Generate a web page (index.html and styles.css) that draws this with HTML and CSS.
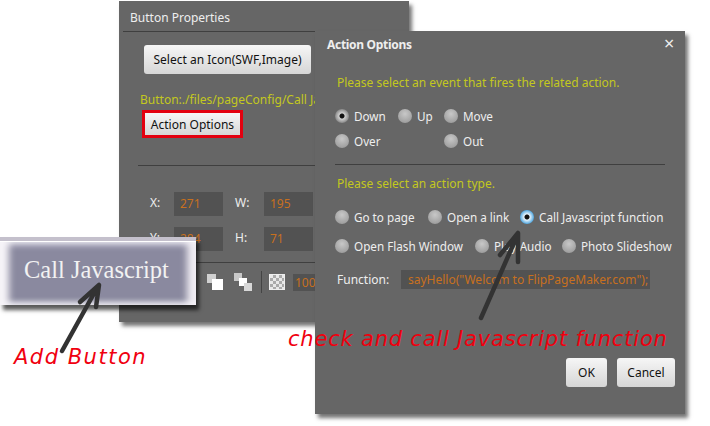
FILE: index.html
```html
<!DOCTYPE html>
<html>
<head>
  <meta charset="utf-8">
  <title>Call Javascript</title>
  <link rel="stylesheet" href="styles.css">
</head>
<body>
  <div class="stage">
    <div class="window back-window">
      <div class="back-title">Button Properties</div>
      <div class="back-body">
        <button class="button icon-button">Select an Icon(SWF,Image)</button>
        <div class="hint path-text">Button:./files/pageConfig/Call Javascript.swf</div>
        <button class="button action-button">Action Options</button>
        <div class="rule first-rule"></div>
        <div class="size-row">
          <span class="field-label">X:</span><span class="field">271</span>
          <span class="field-label second">W:</span><span class="field">195</span>
        </div>
        <div class="size-row">
          <span class="field-label">Y:</span><span class="field">284</span>
          <span class="field-label second">H:</span><span class="field">71</span>
        </div>
        <div class="rule second-rule"></div>
        <div class="tool-row">
          <svg class="tool-icon front-icon" width="16" height="16" viewBox="0 0 16 16">
            <rect x="0" y="0" width="9" height="9" fill="#d0d0d0"/>
            <rect x="5" y="5" width="11" height="11" fill="#fff"/>
          </svg>
          <svg class="tool-icon stack-icon" width="18" height="18" viewBox="0 0 18 18">
            <rect x="0" y="0" width="8" height="8" fill="#c8c8c8"/>
            <rect x="5" y="5" width="8" height="8" fill="#fff"/>
            <rect x="10" y="10" width="8" height="8" fill="#d8d8d8"/>
          </svg>
          <span class="tool-divider"></span>
          <span class="checker"></span>
          <span class="field small-field">100</span>
        </div>
      </div>
    </div>

    <div class="window front-window">
      <div class="front-title">
        <span>Action Options</span>
        <span class="close">×</span>
      </div>
      <div class="front-body">
        <div class="hint">Please select an event that fires the related action.</div>
        <div class="radio-grid event-grid">
          <label class="radio-item"><i class="radio checked"></i>Down</label>
          <label class="radio-item"><i class="radio"></i>Up</label>
          <label class="radio-item"><i class="radio"></i>Move</label>
          <label class="radio-item"><i class="radio"></i>Over</label>
          <span></span>
          <label class="radio-item"><i class="radio"></i>Out</label>
        </div>
        <div class="rule front-rule"></div>
        <div class="hint">Please select an action type.</div>
        <div class="radio-row type-row">
          <label class="radio-item"><i class="radio"></i>Go to page</label>
          <label class="radio-item"><i class="radio"></i>Open a link</label>
          <label class="radio-item"><i class="radio selected"></i>Call Javascript function</label>
        </div>
        <div class="radio-row flash-row">
          <label class="radio-item"><i class="radio"></i>Open Flash Window</label>
          <label class="radio-item"><i class="radio"></i>Play Audio</label>
          <label class="radio-item"><i class="radio"></i>Photo Slideshow</label>
        </div>
        <div class="function-row">
          <span class="function-label">Function:</span>
          <span class="function-input">sayHello("Welcom to FlipPageMaker.com");</span>
        </div>
        <div class="dialog-buttons">
          <button class="button ok-button">OK</button>
          <button class="button cancel-button">Cancel</button>
        </div>
      </div>
    </div>

    <div class="demo-button">Call Javascript</div>

    <svg class="arrows" width="710" height="426" viewBox="0 0 710 426">
      <path d="M62 351 L97 288 M80 302 L99 285 L96 307" />
      <path d="M481 318 L517 236 M500 255 L518 233 L518 262" />
    </svg>

    <div class="note add-note">Add Button</div>
    <div class="note check-note">check and call Javascript function</div>
  </div>
</body>
</html>
```

FILE: styles.css
```css
* {
  margin: 0;
  padding: 0;
  box-sizing: border-box;
}

body {
  width: 710px;
  height: 426px;
  overflow: hidden;
  background-color: #fff;
  font-family: 'Noto Sans', sans-serif;
  font-size: 12px;
  color: #eee;
}

.stage {
  position: relative;
  width: 710px;
  height: 426px;
}

.window {
  position: absolute;
  background-color: #666;
  box-shadow: 3px 4px 4px rgba(0, 0, 0, 0.55);
}

.back-window {
  left: 119px;
  top: 1px;
  width: 290px;
  height: 321px;
}

.back-title {
  margin: 0 94px 0 4px;
  height: 31px;
  padding: 8px 0 0 7px;
  border-bottom: 1px solid #3f3f3f;
}

.back-body {
  padding: 13px 0 0 19px;
}

.button {
  display: block;
  border: none;
  border-radius: 3px;
  background: linear-gradient(#f6f6f6, #d6d6d6);
  color: #111;
  font-family: inherit;
  font-size: 12px;
}

.icon-button {
  width: 167px;
  height: 29px;
  margin-left: 6px;
}

.hint {
  color: #c3c81e;
  line-height: 16px;
  white-space: nowrap;
}

.path-text {
  margin: 18px 0 0 2px;
}

.action-button {
  width: 101px;
  height: 28px;
  margin: 2px 0 0 4px;
  border: 3px solid #e3000f;
  border-radius: 0;
}

.rule {
  height: 1px;
  background-color: #3f3f3f;
}

.first-rule {
  width: 177px;
  margin-top: 27px;
}

.size-row {
  display: flex;
  align-items: center;
  height: 24px;
  margin-top: 11px;
  padding-left: 12px;
}

.first-rule + .size-row {
  margin-top: 26px;
}

.field-label {
  width: 24px;
  line-height: 16px;
  padding-bottom: 2px;
}

.field-label.second {
  width: 29px;
  margin-left: 12px;
}

.field {
  flex: none;
  width: 49px;
  height: 24px;
  padding-left: 6px;
  line-height: 24px;
  background-color: #525252;
  color: #c8701e;
}

.second-rule {
  width: 177px;
  margin-top: 11px;
}

.tool-row {
  display: flex;
  align-items: center;
  margin-top: 8px;
  padding-left: 69px;
  height: 22px;
}

.front-icon {
  margin-right: 11px;
}

.stack-icon {
  margin-right: 9px;
}

.tool-divider {
  width: 1px;
  height: 22px;
  margin-right: 7px;
  background-color: #444;
}

.checker {
  flex: none;
  width: 16px;
  height: 16px;
  margin-right: 8px;
  border: 1px solid #eee;
  background: repeating-conic-gradient(#aaa 0% 25%, #e8e8e8 0% 50%) 0 0 / 6px 6px;
}

.small-field {
  height: 17px;
  line-height: 17px;
  padding-left: 2px;
}

.front-window {
  left: 315px;
  top: 31px;
  width: 370px;
  height: 383px;
}

.front-title {
  display: flex;
  justify-content: space-between;
  height: 30px;
  padding: 5px 11px 0 12px;
  font-weight: 700;
  letter-spacing: -0.3px;
}

.close {
  font-size: 18px;
  font-weight: 400;
  line-height: 14px;
}

.front-body {
  padding: 14px 10px 0 22px;
}

.radio-item {
  display: flex;
  align-items: center;
  gap: 5px;
  font-size: 11.7px;
  white-space: nowrap;
}

.radio {
  flex: none;
  width: 14px;
  height: 14px;
  margin-left: -1px;
  border-radius: 50%;
  background: radial-gradient(circle at 50% 35%, #c8c8c8, #929292);
}

.radio.checked {
  background: radial-gradient(circle, #111 0 2px, #d0d0d0 3px, #888 7px);
}

.radio.selected {
  background: radial-gradient(circle, #111 0 2px, #e8f4fc 3px, #4fa6e0 7px);
}

.radio-grid {
  display: grid;
  grid-template-columns: 63px 46px auto;
  grid-auto-rows: 25px;
  align-items: center;
  margin: 12px 0 0 -1px;
}

.front-rule {
  width: 330px;
  margin: 11px 0 11px -2px;
}

.radio-row {
  display: grid;
  align-items: center;
  margin-left: -1px;
  height: 24px;
}

.type-row {
  grid-template-columns: 93px 92px auto;
  margin-top: 13px;
}

.flash-row {
  grid-template-columns: 140px 87px auto;
  margin-top: 5px;
}

.function-row {
  display: flex;
  align-items: center;
  margin-top: 12px;
}

.function-label {
  width: 64px;
}

.function-input {
  width: 249px;
  height: 19px;
  padding-left: 7px;
  line-height: 19px;
  white-space: nowrap;
  background-color: #525252;
  color: #c8701e;
}

.dialog-buttons {
  display: flex;
  justify-content: flex-end;
  gap: 10px;
  margin-top: 69px;
}

.ok-button {
  width: 41px;
  height: 29px;
}

.cancel-button {
  width: 58px;
  height: 29px;
}

.demo-button {
  position: absolute;
  left: 0;
  top: 237px;
  width: 196px;
  height: 68px;
  padding-left: 24px;
  border-top: 4px solid #c4c0cc;
  font-family: 'Liberation Serif', serif;
  font-size: 24.5px;
  line-height: 58px;
  color: #f2f2f2;
  background-color: #8a899f;
  box-shadow: inset 0 1px 0 #fff, inset 9px 0 7px #f6f4f8, inset -9px 0 7px #efecf2, inset 0 5px 6px #b4b2c4, inset 0 -4px 5px #aeacbe, 3px 5px 4px rgba(0, 0, 0, 0.65);
}

.arrows {
  position: absolute;
  left: 0;
  top: 0;
  fill: none;
  stroke: #333;
  stroke-width: 4.5;
  stroke-linecap: round;
  stroke-linejoin: round;
}

.note {
  position: absolute;
  color: #f0000f;
  font-family: 'DejaVu Sans', sans-serif;
  font-style: italic;
  white-space: nowrap;
}

.add-note {
  left: 14px;
  top: 345px;
  font-size: 21px;
  letter-spacing: 1.5px;
}

.check-note {
  left: 288px;
  top: 327px;
  font-size: 21px;
  letter-spacing: 0.8px;
}
```
